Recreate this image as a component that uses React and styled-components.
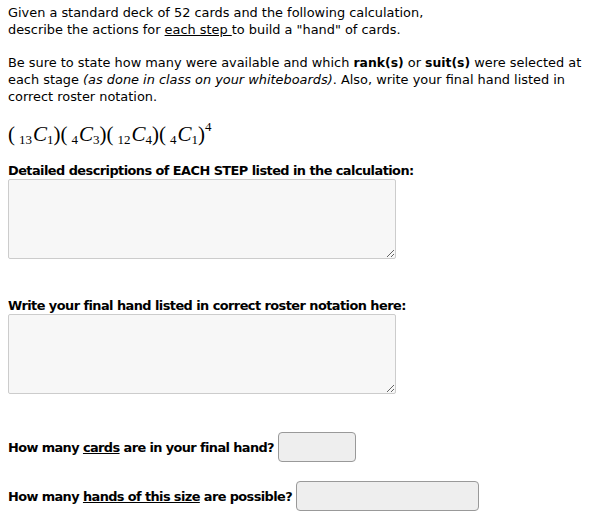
import React from 'react'
import styled, { createGlobalStyle } from 'styled-components'

const GlobalStyle = createGlobalStyle`
    body {
        margin: 4px 8px 8px;
        background: #fff;
        color: #000;
        font-family: 'DejaVu Sans', Tahoma, sans-serif;
        font-size: 12.9px;
        line-height: 17px;
    }
`

const Page = styled.div`
    display: flex;
    flex-direction: column;
`

const Para = styled.p`
    margin: 0 0 16px;
    width: 590px;
`

const Strong = styled.b`
    font-size: 12.4px;
`

const Math = styled.div`
    font-family: 'Liberation Serif', 'DejaVu Serif', serif;
    font-size: 21px;
    line-height: 24px;
    margin: 0 0 16px;
    padding-top: 1px;

    & i {
        font-style: italic;
    }
    & sub {
        font-size: 13px;
        vertical-align: -3px;
        line-height: 0;
    }
    & sup {
        font-size: 13px;
        vertical-align: 10px;
        line-height: 0;
    }
`

const Pre = styled.sub`
    margin: 0 1px 0 4px;
`

const Heading = styled.label`
    font-weight: bold;
    letter-spacing: -0.55px;
    display: block;
`

const Area = styled.textarea`
    display: block;
    box-sizing: border-box;
    width: 388px;
    height: 80px;
    background: #f7f7f7;
    border: 1px solid #ccc;
    border-radius: 2px;
    margin: 0 0 ${(p) => p.$after}px;
    padding: 4px;
    resize: vertical;
`

const Row = styled.div`
    display: flex;
    align-items: center;
    gap: 4px;
    font-weight: bold;
    letter-spacing: -0.6px;
    margin-bottom: ${(p) => p.$after}px;
`

const Field = styled.input`
    box-sizing: border-box;
    width: ${(p) => p.$w}px;
    height: 30px;
    background: #eee;
    border: 1px solid #999;
    border-radius: 4px;
`

const U = styled.span`
    text-decoration: underline;
`

function Term({ n, k }) {
    return (
        <>
            (<Pre>{n}</Pre>
            <i>C</i>
            <sub>{k}</sub>)
        </>
    )
}

export default function App() {
    return (
        <Page>
            <GlobalStyle />
            <Para>
                Given a standard deck of 52 cards and the following calculation,
                <br />
                describe the actions for <U>each step </U>to build a "hand" of cards.
            </Para>
            <Para>
                Be sure to state how many were available and which <Strong>rank(s)</Strong> or{' '}
                <Strong>suit(s)</Strong> were selected at
                <br />
                each stage <i>(as done in class on your whiteboards)</i>. Also, write your final
                hand listed in
                <br />
                correct roster notation.
            </Para>
            <Math>
                <Term n="13" k="1" />
                <Term n="4" k="3" />
                <Term n="12" k="4" />
                <Term n="4" k="1" />
                <sup>4</sup>
            </Math>
            <Heading>Detailed descriptions of EACH STEP listed in the calculation:</Heading>
            <Area $after={38} />
            <Heading>Write your final hand listed in correct roster notation here:</Heading>
            <Area $after={38} />
            <Row $after={19}>
                How many <U>cards</U> are in your final hand?
                <Field $w={78} />
            </Row>
            <Row $after={0}>
                How many <U>hands of this size</U> are possible?
                <Field $w={183} />
            </Row>
        </Page>
    )
}
